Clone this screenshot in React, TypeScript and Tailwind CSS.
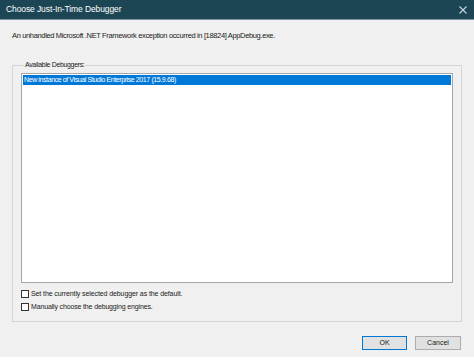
export default function App() {
  return (
    <div className="w-[474px] h-[362px] bg-white font-['Liberation_Sans',sans-serif]">
      <div className="h-[357px] bg-[#f0f0f0] flex flex-col">
        {/* Title bar */}
        <div className="h-[19px] bg-[#1d4655] flex items-center justify-between pl-[6px] pr-[7px]">
          <span className="text-[8.5px] text-white tracking-[-0.1px]">Choose Just-In-Time Debugger</span>
          <svg width="8" height="8" viewBox="0 0 8 8" className="text-[#c9d6db]">
            <path d="M0.5 0.5 L7.5 7.5 M7.5 0.5 L0.5 7.5" stroke="currentColor" strokeWidth="1.1" />
          </svg>
        </div>
        <div className="h-px bg-[#7b98a2]" />

        <div className="pl-[12px] pr-[12px] pt-[11px]">
          <p className="text-[7.5px] leading-[10px] tracking-[-0.35px] text-[#1a1a1a]">
            An unhandled Microsoft .NET Framework exception occurred in [18824] AppDebug.exe.
          </p>

          <fieldset className="mt-[19px] border border-[#d5d5d5] h-[262px] px-[8px] pt-[3px] flex flex-col">
            <legend className="ml-[3px] px-[1px] text-[7px] leading-[10px] tracking-[-0.35px] text-[#1a1a1a]">
              Available Debuggers:
            </legend>
            <div className="h-[210px] bg-white border border-[#a6a6a6] p-px">
              <div className="h-[10px] bg-[#0078d7] text-white text-[7px] leading-[10px] tracking-[-0.4px] pl-px">
                New instance of Visual Studio Enterprise 2017 (15.9.68)
              </div>
            </div>
            <div className="mt-[7px] flex flex-col gap-[5px]">
              <label className="flex items-center gap-[2px] text-[7px] leading-[8px] tracking-[-0.1px] text-[#1a1a1a]">
                <span className="w-[8px] h-[8px] border border-[#333] bg-white" />
                Set the currently selected debugger as the default.
              </label>
              <label className="flex items-center gap-[2px] text-[7px] leading-[8px] tracking-[-0.15px] text-[#1a1a1a]">
                <span className="w-[8px] h-[8px] border border-[#333] bg-white" />
                Manually choose the debugging engines.
              </label>
            </div>
          </fieldset>

          <div className="mt-[14px] flex justify-end gap-[8px] pr-px">
            <button className="w-[45px] h-[14px] bg-[#e1e1e1] border-[1.5px] border-[#0078d7] text-[7px] text-[#1a1a1a]">
              OK
            </button>
            <button className="w-[46px] h-[14px] bg-[#e1e1e1] border border-[#adadad] text-[7px] text-[#1a1a1a]">
              Cancel
            </button>
          </div>
        </div>
      </div>
    </div>
  );
}
